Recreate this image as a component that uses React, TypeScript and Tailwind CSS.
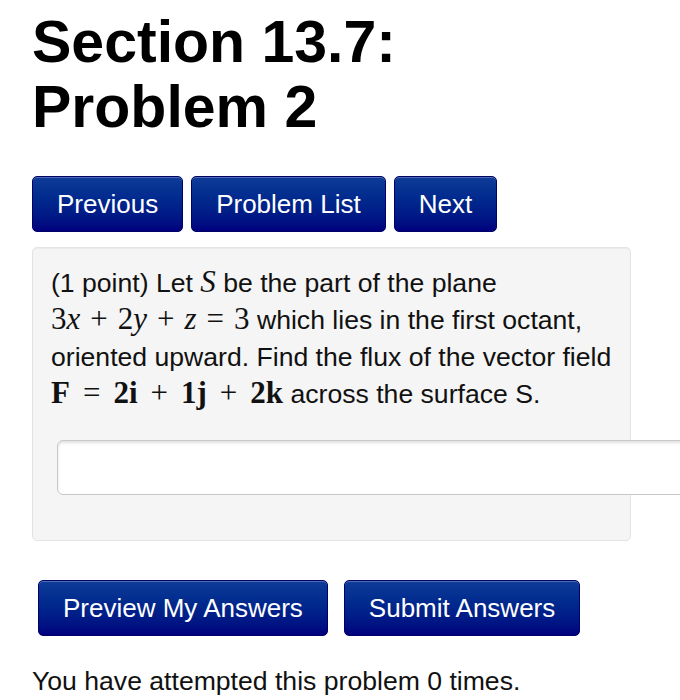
import React from 'react';

const sans = { fontFamily: '"Liberation Sans", Arial, Helvetica, sans-serif' };

const NavButton: React.FC<{ label: string; className?: string }> = ({ label, className = '' }) => (
  <button
    className={`h-[56px] px-6 rounded-[5px] border border-[#000066] bg-gradient-to-b from-[#0f3c98] to-[#00007e] text-white text-[26px] leading-none shadow-[inset_0_1px_0_rgba(255,255,255,0.25)] ${className}`}
  >
    {label}
  </button>
);

// math bits, rendered roughly like MathJax output
const MI: React.FC<{ children: React.ReactNode }> = ({ children }) => (
  <span className="italic font-['Liberation_Serif',serif] text-[31px] leading-none">{children}</span>
);
const MN: React.FC<{ children: React.ReactNode; bold?: boolean }> = ({ children, bold }) => (
  <span className={`font-['Liberation_Serif',serif] text-[31px] leading-none ${bold ? 'font-bold' : ''}`}>{children}</span>
);
const Op: React.FC<{ children: React.ReactNode; wide?: boolean }> = ({ children, wide }) => (
  <span className={`font-['Liberation_Serif',serif] text-[31px] leading-none ${wide ? 'mx-[13px]' : 'mx-[10px]'}`}>{children}</span>
);

const App: React.FC = () => {
  return (
    <div className="w-[680px] h-[700px] bg-white overflow-hidden text-[#111]" style={sans}>
      <div className="px-8">
        <h1 className="pt-[10px] text-[59px] leading-[65px] font-bold text-black">
          Section 13.7:
          <br />
          Problem 2
        </h1>

        <div className="mt-[36px] flex gap-2">
          <NavButton label="Previous" />
          <NavButton label="Problem List" />
          <NavButton label="Next" />
        </div>

        <div className="mt-[15px] w-[599px] h-[294px] rounded-[5px] border border-[#e3e3e3] bg-[#f5f5f5] shadow-[inset_0_1px_1px_rgba(0,0,0,0.04)] pt-[17px] pl-[18px] overflow-visible">
          <div className="text-[26.6px] leading-[37px] whitespace-nowrap">
            <div>
              (1 point) Let <MI>S</MI> be the part of the plane
            </div>
            <div>
              <MN>3</MN>
              <MI>x</MI>
              <Op>+</Op>
              <MN>2</MN>
              <MI>y</MI>
              <Op>+</Op>
              <MI>z</MI>
              <Op>=</Op>
              <MN>3</MN> which lies in the first octant,
            </div>
            <div>oriented upward. Find the flux of the vector field</div>
            <div>
              <MN bold>F</MN>
              <Op wide>=</Op>
              <MN bold>2i</MN>
              <Op wide>+</Op>
              <MN bold>1j</MN>
              <Op wide>+</Op>
              <MN bold>2k</MN> across the surface S.
            </div>
          </div>

          <input
            type="text"
            className="mt-[27px] ml-[6px] block w-[640px] h-[55px] rounded-[6px] border border-[#c8c8c8] bg-white shadow-[inset_0_2px_3px_rgba(0,0,0,0.12)] outline-none"
          />
        </div>

        <div className="mt-[39px] ml-[6px] flex gap-4">
          <NavButton label="Preview My Answers" />
          <NavButton label="Submit Answers" />
        </div>

        <p className="mt-[27px] text-[26.6px] leading-[37px]">You have attempted this problem 0 times.</p>
      </div>
    </div>
  );
};

export default App;
